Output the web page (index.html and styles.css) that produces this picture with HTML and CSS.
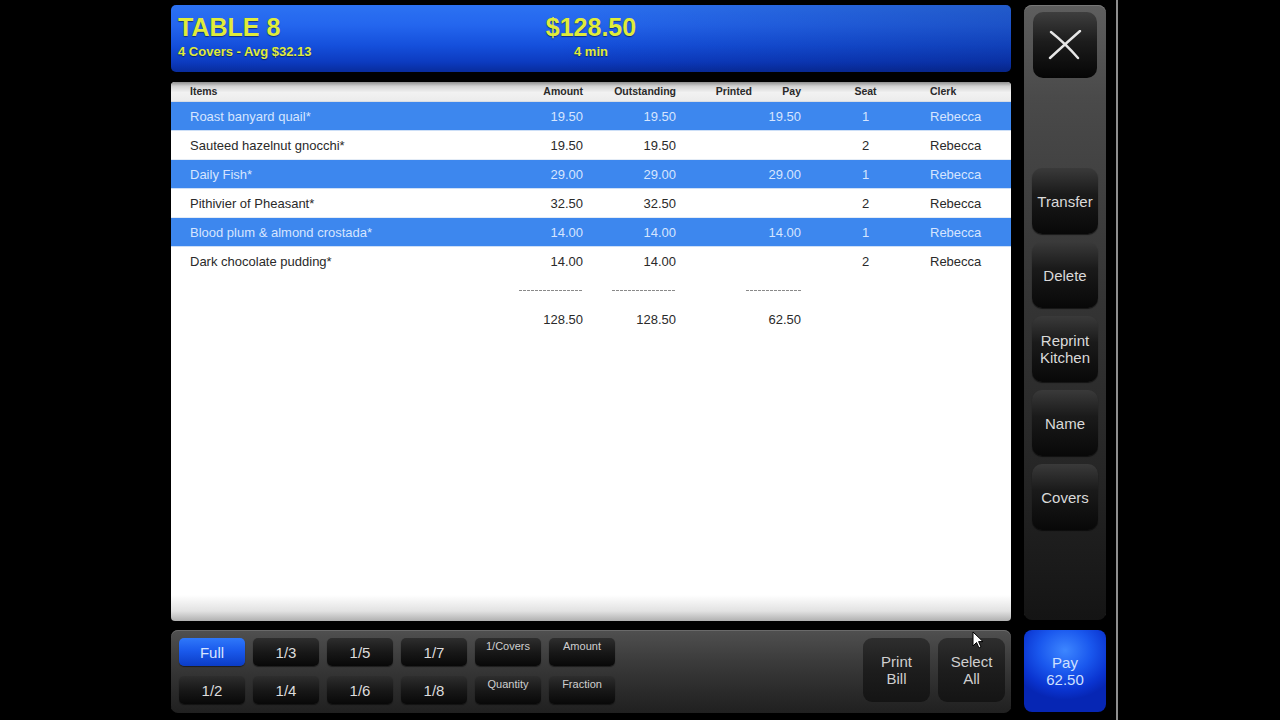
FILE: index.html
```html
<!DOCTYPE html>
<html>
<head>
<meta charset="utf-8">
<title>Table 8</title>
<link rel="stylesheet" href="styles.css">
</head>
<body>
<div class="screen">
  <div class="gutter"></div>
  <div class="main">
    <header class="head">
      <div class="head-left">
        <div class="title">TABLE 8</div>
        <div class="sub">4 Covers - Avg $32.13</div>
      </div>
      <div class="head-center">
        <div class="title">$128.50</div>
        <div class="sub">4 min</div>
      </div>
      <div></div>
    </header>

    <section class="ticket">
      <div class="row hdr">
        <span>Items</span><span class="r">Amount</span><span class="r">Outstanding</span><span class="r">Printed</span><span class="r">Pay</span><span class="c">Seat</span><span>Clerk</span>
      </div>
      <div class="row sel">
        <span>Roast banyard quail*</span><span class="r">19.50</span><span class="r">19.50</span><span class="r"></span><span class="r">19.50</span><span class="c">1</span><span>Rebecca</span>
      </div>
      <div class="row">
        <span>Sauteed hazelnut gnocchi*</span><span class="r">19.50</span><span class="r">19.50</span><span class="r"></span><span class="r"></span><span class="c">2</span><span>Rebecca</span>
      </div>
      <div class="row sel">
        <span>Daily Fish*</span><span class="r">29.00</span><span class="r">29.00</span><span class="r"></span><span class="r">29.00</span><span class="c">1</span><span>Rebecca</span>
      </div>
      <div class="row">
        <span>Pithivier of Pheasant*</span><span class="r">32.50</span><span class="r">32.50</span><span class="r"></span><span class="r"></span><span class="c">2</span><span>Rebecca</span>
      </div>
      <div class="row sel">
        <span>Blood plum &amp; almond crostada*</span><span class="r">14.00</span><span class="r">14.00</span><span class="r"></span><span class="r">14.00</span><span class="c">1</span><span>Rebecca</span>
      </div>
      <div class="row last">
        <span>Dark chocolate pudding*</span><span class="r">14.00</span><span class="r">14.00</span><span class="r"></span><span class="r"></span><span class="c">2</span><span>Rebecca</span>
      </div>
      <div class="row plain">
        <span></span><span class="dcell"><i class="dash"></i></span><span class="dcell"><i class="dash"></i></span><span></span><span class="dcell"><i class="dash short"></i></span><span class="c"></span><span></span>
      </div>
      <div class="row plain">
        <span></span><span class="r">128.50</span><span class="r">128.50</span><span class="r"></span><span class="r">62.50</span><span class="c"></span><span></span>
      </div>
    </section>

    <div class="bar">
      <div class="fracs">
        <div class="fbtn on">Full</div>
        <div class="fbtn">1/3</div>
        <div class="fbtn">1/5</div>
        <div class="fbtn">1/7</div>
        <div class="fbtn small">1/Covers</div>
        <div class="fbtn small">Amount</div>
        <div class="fbtn">1/2</div>
        <div class="fbtn">1/4</div>
        <div class="fbtn">1/6</div>
        <div class="fbtn">1/8</div>
        <div class="fbtn small">Quantity</div>
        <div class="fbtn small">Fraction</div>
      </div>
      <div class="actions">
        <div class="abtn">Print<br>Bill</div>
        <div class="abtn">Select<br>All</div>
      </div>
    </div>
  </div>

  <div class="side">
    <div class="side-panel">
      <div class="close">
        <svg width="34" height="30" viewBox="0 0 34 30"><path d="M2 28 Q15 16 32 1 M3 2 Q18 14 30 28" fill="none" stroke="#e6e6e6" stroke-width="2.4" stroke-linecap="round"/></svg>
      </div>
      <div class="sbtn first">Transfer</div>
      <div class="sbtn">Delete</div>
      <div class="sbtn">Reprint<br>Kitchen</div>
      <div class="sbtn">Name</div>
      <div class="sbtn">Covers</div>
    </div>
    <div class="pay">Pay<br>62.50</div>
  </div>

  <div class="edge"></div>

  <svg class="cursor" width="13" height="19" viewBox="0 0 13 19"><path d="M1 1 L1 15 L4.5 11.5 L7 17 L9 16 L6.6 10.6 L11 10.6 Z" fill="#fff" stroke="#000" stroke-width="1"/></svg>
</div>
</body>
</html>
```

FILE: styles.css
```css
html, body {
  margin: 0;
  padding: 0;
  background: #000;
}
body {
  font-family: "Liberation Sans", Arial, sans-serif;
}
.screen {
  position: relative;
  display: flex;
  width: 1280px;
  height: 720px;
  overflow: hidden;
  background: #000;
}
.gutter {
  width: 171px;
  flex: none;
}
.main {
  width: 840px;
  flex: none;
  display: flex;
  flex-direction: column;
  padding-top: 5px;
}

/* header */
.head {
  height: 67px;
  box-sizing: border-box;
  border-radius: 5px;
  padding: 8px 7px 0;
  display: grid;
  grid-template-columns: 1fr auto 1fr;
  color: #e0ec3a;
  text-shadow: 0 1px 1px rgba(0, 0, 40, 0.5);
  background:
    linear-gradient(to right, rgba(0, 0, 30, 0) 0%, rgba(0, 0, 30, 0) 45%, rgba(0, 10, 60, 0.22) 100%),
    linear-gradient(to bottom, #2c72f2 0%, #2466ee 30%, #1550dc 60%, #0c3bc0 85%, #082c9c 100%);
}
.head-center {
  text-align: center;
}
.title {
  font-size: 25px;
  font-weight: bold;
  line-height: 28px;
}
.sub {
  font-size: 13px;
  font-weight: bold;
  line-height: 16px;
  margin-top: 3px;
}

/* ticket */
.ticket {
  margin-top: 10px;
  height: 539px;
  border-radius: 4px;
  overflow: hidden;
  background: linear-gradient(to bottom, #fff 0, #fff calc(100% - 26px), #e2e2e2 calc(100% - 10px), #b0b0b0 100%);
}
.row {
  display: grid;
  grid-template-columns: 330px 63px 93px 76px 49px 129px 1fr;
  padding-left: 19px;
  height: 28px;
  line-height: 27px;
  align-items: center;
  border-bottom: 1px solid #e4ecf6;
  font-size: 13px;
  color: #2a2a2a;
  white-space: nowrap;
}
.row.sel {
  background: #3d87ee;
  color: #d6e5ff;
  border-bottom-color: #cddff7;
}
.row.plain,
.row.last {
  border-bottom-color: transparent;
}
.row.hdr {
  height: 19px;
  line-height: 19px;
  font-size: 10.5px;
  font-weight: bold;
  color: #2a2a2a;
  border-bottom: 1px solid #d8dde4;
  background: linear-gradient(to bottom, #8e8e8e 0%, #d2d2d2 22%, #f2f2f2 55%, #ececec 100%);
}
.r {
  text-align: right;
}
.c {
  text-align: center;
}
.dcell {
  display: flex;
  justify-content: flex-end;
  align-items: center;
}
.dash {
  flex: none;
  display: block;
  width: 64px;
  height: 1px;
  background: repeating-linear-gradient(to right, #8a8a8a 0, #8a8a8a 3px, transparent 3px, transparent 4px);
}
.dash.short {
  width: 55px;
}

/* bottom bar */
.bar {
  margin-top: 9px;
  height: 83px;
  box-sizing: border-box;
  border-radius: 7px;
  padding: 8px 6px 0 8px;
  display: flex;
  align-items: flex-start;
  background: linear-gradient(to bottom, #505050 0%, #3a3a3a 40%, #2a2a2a 75%, #202020 100%);
  box-shadow: inset 0 1px 0 #6a6a6a;
}
.fracs {
  display: grid;
  grid-template-columns: repeat(6, 66px);
  grid-template-rows: 28px 28px;
  column-gap: 8px;
  row-gap: 10px;
}
.fbtn {
  border-radius: 5px;
  display: flex;
  align-items: center;
  justify-content: center;
  font-size: 15px;
  color: #dcdcdc;
  background: linear-gradient(to bottom, #2e2e2e 0%, #181818 50%, #080808 100%);
  box-shadow: 0 1px 1px rgba(0, 0, 0, 0.5);
}
.fbtn.small {
  font-size: 11px;
  align-items: flex-start;
  padding-top: 2px;
  box-sizing: border-box;
  color: #cfcfcf;
}
.fbtn.on {
  color: #d8e6ff;
  background: linear-gradient(to bottom, #2f78fa 0%, #1a5aec 45%, #0b3cc6 100%);
}
.actions {
  margin-left: auto;
  display: flex;
  gap: 8px;
}
.abtn {
  width: 67px;
  height: 64px;
  border-radius: 9px;
  display: flex;
  align-items: center;
  justify-content: center;
  text-align: center;
  font-size: 15px;
  line-height: 17px;
  color: #cfcfcf;
  background: linear-gradient(to bottom, #2e2e2e 0%, #1e1e1e 45%, #141414 100%);
}

/* side */
.side {
  margin-left: 13px;
  width: 82px;
  flex: none;
  display: flex;
  flex-direction: column;
  padding-top: 5px;
}
.side-panel {
  height: 615px;
  box-sizing: border-box;
  border-radius: 8px;
  padding-top: 7px;
  display: flex;
  flex-direction: column;
  align-items: center;
  background: linear-gradient(to bottom, #5e5e5e 0%, #4a4a4a 15%, #363636 45%, #262626 75%, #141414 100%);
  box-shadow: inset 0 1px 0 #777;
}
.close {
  width: 64px;
  height: 66px;
  border-radius: 10px;
  display: flex;
  align-items: center;
  justify-content: center;
  background: linear-gradient(to bottom, #3e3e3e 0%, #1c1c1c 45%, #050505 100%);
}
.sbtn {
  width: 66px;
  height: 66px;
  margin-top: 8px;
  border-radius: 10px;
  display: flex;
  align-items: center;
  justify-content: center;
  text-align: center;
  font-size: 15px;
  line-height: 17px;
  color: #dadada;
  background: linear-gradient(to bottom, #3a3a3a 0%, #1a1a1a 40%, #080808 100%);
  box-shadow: 0 1px 1px rgba(0, 0, 0, 0.6);
}
.sbtn.first {
  margin-top: 90px;
}
.pay {
  margin-top: 10px;
  height: 82px;
  border-radius: 8px;
  display: flex;
  align-items: center;
  justify-content: center;
  text-align: center;
  font-size: 15px;
  line-height: 17px;
  color: #cfe0ff;
  background: radial-gradient(ellipse 70% 60% at 50% 25%, #3d86ff 0%, #1a58ee 45%, #0a34d0 80%, #0626b4 100%);
}
.edge {
  margin-left: 10px;
  width: 2px;
  flex: none;
  background: #8e8e8e;
}
.cursor {
  position: absolute;
  left: 972px;
  top: 631px;
}
```
